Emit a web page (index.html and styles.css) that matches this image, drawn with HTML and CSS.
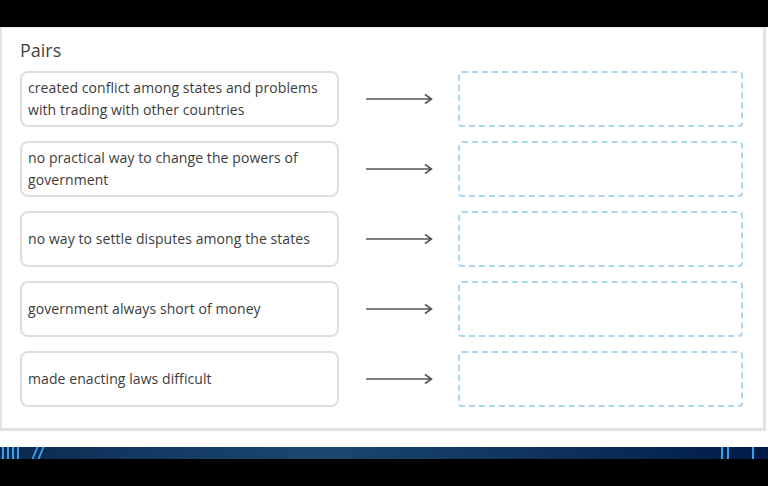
FILE: index.html
```html
<!DOCTYPE html>
<html lang="en">
<head>
    <meta charset="UTF-8">
    <title>Pairs</title>
    <link rel="stylesheet" href="styles.css">
</head>
<body>
    <div class="topbar"></div>

    <div class="stage">
        <div class="panel">
            <h2>Pairs</h2>
            <div class="pairs">
                <div class="pair">
                    <div class="term">created conflict among states and problems with trading with other countries</div>
                    <div class="arrow"><svg width="68" height="12" viewBox="0 0 68 12"><path d="M0 6H65M59 1.5L65.5 6L59 10.5" fill="none" stroke="#555" stroke-width="1.6"/></svg></div>
                    <div class="drop"></div>
                </div>
                <div class="pair">
                    <div class="term">no practical way to change the powers of government</div>
                    <div class="arrow"><svg width="68" height="12" viewBox="0 0 68 12"><path d="M0 6H65M59 1.5L65.5 6L59 10.5" fill="none" stroke="#555" stroke-width="1.6"/></svg></div>
                    <div class="drop"></div>
                </div>
                <div class="pair">
                    <div class="term">no way to settle disputes among the states</div>
                    <div class="arrow"><svg width="68" height="12" viewBox="0 0 68 12"><path d="M0 6H65M59 1.5L65.5 6L59 10.5" fill="none" stroke="#555" stroke-width="1.6"/></svg></div>
                    <div class="drop"></div>
                </div>
                <div class="pair">
                    <div class="term">government always short of money</div>
                    <div class="arrow"><svg width="68" height="12" viewBox="0 0 68 12"><path d="M0 6H65M59 1.5L65.5 6L59 10.5" fill="none" stroke="#555" stroke-width="1.6"/></svg></div>
                    <div class="drop"></div>
                </div>
                <div class="pair">
                    <div class="term">made enacting laws difficult</div>
                    <div class="arrow"><svg width="68" height="12" viewBox="0 0 68 12"><path d="M0 6H65M59 1.5L65.5 6L59 10.5" fill="none" stroke="#555" stroke-width="1.6"/></svg></div>
                    <div class="drop"></div>
                </div>
            </div>
        </div>
    </div>

    <div class="footer-bar">
        <div class="stripes">
            <span class="line"></span><span class="line"></span><span class="line"></span><span class="line"></span>
            <span class="slash"></span><span class="slash"></span>
        </div>
        <div class="stripes right">
            <span class="line"></span><span class="line"></span><span class="line far"></span>
        </div>
    </div>

    <div class="bottom"></div>
</body>
</html>
```

FILE: styles.css
```css
* { margin: 0; padding: 0; box-sizing: border-box; }
body {
    font-family: "Open Sans", "Liberation Sans", sans-serif;
    background: #000;
    color: #3a3a3a;
    width: 768px;
    height: 486px;
    overflow: hidden;
}
.topbar { height: 27px; background: #000; }
.stage { background: #fff; padding: 0 2px 16px 0; }
.panel {
    background: #fff;
    border: 2px solid #e2e2e2;
    border-top: 1px solid #e6e6e6;
    border-right-width: 3px;
    border-bottom-width: 3px;
    padding: 10px 20px 21px 18px;
}
.panel h2 {
    font-size: 18px;
    font-weight: normal;
    color: #444;
    line-height: 24px;
    margin-bottom: 9px;
}
.pairs { display: flex; flex-direction: column; gap: 14px; }
.pair {
    display: grid;
    grid-template-columns: 319px 119px 285px;
    height: 56px;
}
.term {
    border: 2px solid #dedede;
    border-radius: 8px;
    padding: 0 6px;
    display: flex;
    align-items: center;
    font-size: 14px;
    line-height: 22px;
    letter-spacing: 0.08px;
    color: #3c3c3c;
}
.arrow {
    display: flex;
    align-items: center;
    padding-left: 27px;
}
.arrow svg { display: block; }
.drop {
    border: 2px dashed #a9d7ee;
    border-radius: 4px;
}
.footer-bar {
    height: 12px;
    background: linear-gradient(90deg, #0a2850 0%, #133a63 20%, #1a4770 42%, #0f335c 70%, #001a48 100%);
    display: flex;
    justify-content: space-between;
    overflow: hidden;
}
.stripes { display: flex; height: 12px; padding-left: 2px; }
.stripes .line { width: 2px; height: 12px; background: #3d9fe6; margin-right: 3px; }
.stripes .line:nth-child(4) { margin-right: 15px; }
.stripes .slash {
    width: 2px; height: 12px; background: #3d9fe6;
    transform: skewX(-22deg); margin-right: 4px;
}
.stripes.right { padding-left: 0; padding-right: 14px; }
.stripes.right .line { margin-right: 4px; }
.stripes.right .line:nth-child(2) { margin-right: 23px; }
.stripes.right .far { margin-right: 0; }
.bottom { height: 27px; background: #000; }
```
